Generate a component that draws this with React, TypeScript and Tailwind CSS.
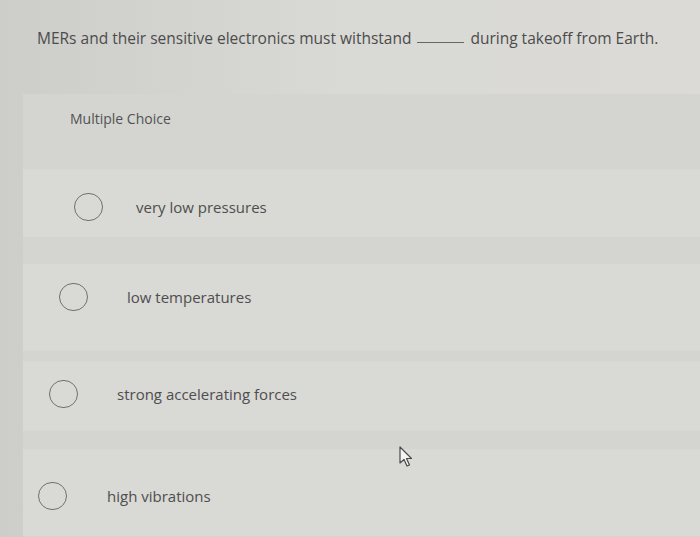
const options = [
  { label: "very low pressures", rowClass: "h-[68px] pt-[24px] pl-[51px] gap-[33px]" },
  { label: "low temperatures", rowClass: "mt-[27px] h-[87px] pt-[19px] pl-[36px] gap-[39px]" },
  { label: "strong accelerating forces", rowClass: "mt-[10px] h-[70px] pt-[19px] pl-[26px] gap-[39px]" },
  { label: "high vibrations", rowClass: "mt-[18px] h-[87px] pt-[33px] pl-[15px] gap-[40px]" },
];

function Radio() {
  return (
    <span className="block w-[29px] h-[28px] shrink-0 rounded-full border-[1.5px] border-[#707070]" />
  );
}

function Cursor() {
  return (
    <svg
      className="absolute left-[398px] top-[446px]"
      width="16"
      height="22"
      viewBox="0 0 16 22"
    >
      <path
        d="M2 1 L2 17 L6 13.5 L9 20 L11.5 19 L8.5 12.5 L13.5 12.5 Z"
        fill="#f4f4f2"
        stroke="#4a4a4a"
        strokeWidth="1.2"
        strokeLinejoin="round"
      />
    </svg>
  );
}

export default function App() {
  return (
    <div className="relative w-[700px] h-[537px] overflow-hidden bg-gradient-to-r from-[#cdcdc9] via-[#d9d9d5] to-[#dbdad6] font-['Open_Sans',sans-serif] antialiased">
      <p className="pt-[27px] pl-[37px] text-[15.5px] leading-[22px] text-[#4c4c4c] whitespace-nowrap">
        MERs and their sensitive electronics must withstand
        <span className="inline-block w-[47px] mx-[6px] border-b border-[#666] align-[1px]" />
        during takeoff from Earth.
      </p>

      <section className="mt-[45px] ml-[23px] h-[460px] bg-[#d4d5d1] flex flex-col">
        <div className="h-[75px] pl-[47px] pt-[15px]">
          <h3 className="text-[14px] leading-[20px] text-[#525252]">Multiple Choice</h3>
        </div>
        {options.map((o) => (
          <div
            key={o.label}
            className={`flex items-start bg-[#d9d9d5] ${o.rowClass}`}
          >
            <Radio />
            <span className="text-[15px] leading-[28px] text-[#4e4e4e]">{o.label}</span>
          </div>
        ))}
      </section>

      <Cursor />
    </div>
  );
}
